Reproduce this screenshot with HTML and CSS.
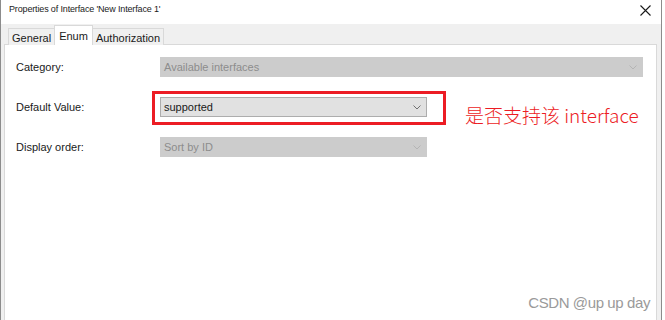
FILE: index.html
```html
<!DOCTYPE html>
<html lang="en">
<head>
<meta charset="utf-8">
<title>Properties of Interface</title>
<link rel="stylesheet" href="styles.css">
</head>
<body>
<div class="window">
  <div class="titlebar">
    <span class="title">Properties of Interface 'New Interface 1'</span>
    <svg class="close" width="11" height="11" viewBox="0 0 11 11"><path d="M0.5 0.5 L10.5 10.5 M10.5 0.5 L0.5 10.5" stroke="#1a1a1a" stroke-width="1.1" fill="none"/></svg>
  </div>
  <div class="client">
    <div class="tabs">
      <div class="tab">General</div>
      <div class="tab active">Enum</div>
      <div class="tab">Authorization</div>
    </div>
    <div class="panel">
      <div class="form">
        <div class="label">Category:</div>
        <div class="field">
          <div class="select disabled wide"><span>Available interfaces</span><svg class="chev" width="8" height="5" viewBox="0 0 8 5"><path d="M0.5 0.5 L4 4 L7.5 0.5" stroke="#b4b4b4" fill="none"/></svg></div>
        </div>
        <div class="label">Default Value:</div>
        <div class="field">
          <div class="highlight">
            <div class="select"><span>supported</span><svg class="chev" width="8" height="5" viewBox="0 0 8 5"><path d="M0.5 0.5 L4 4 L7.5 0.5" stroke="#707070" fill="none"/></svg></div>
          </div>
          <div class="note">是否支持该 interface</div>
        </div>
        <div class="label">Display order:</div>
        <div class="field">
          <div class="select disabled"><span>Sort by ID</span><svg class="chev" width="8" height="5" viewBox="0 0 8 5"><path d="M0.5 0.5 L4 4 L7.5 0.5" stroke="#b4b4b4" fill="none"/></svg></div>
        </div>
      </div>
      <div class="watermark">CSDN @up up day</div>
    </div>
  </div>
</div>
</body>
</html>
```
FILE: styles.css
```css
html, body {
  margin: 0;
  padding: 0;
  background: #ffffff;
  font-family: "Liberation Sans", Arial, sans-serif;
}
.window {
  width: 662px;
  height: 320px;
  box-sizing: border-box;
  border-left: 1px solid #8c8c8c;
  border-right: 1px solid #8c8c8c;
  display: flex;
  flex-direction: column;
  overflow: hidden;
}
.titlebar {
  height: 24px;
  flex: none;
  background: #ffffff;
  display: flex;
  align-items: center;
  justify-content: space-between;
  padding: 0 10px 6px 8px;
  box-sizing: border-box;
}
.title {
  font-size: 9px;
  color: #1a1a1a;
  letter-spacing: -0.15px;
}
.close {
  display: block;
  margin-top: 2px;
}
.client {
  flex: 1;
  background: #f0f0f0;
  padding: 2px 4px 0 3px;
  display: flex;
  flex-direction: column;
}
.tabs {
  display: flex;
  align-items: flex-end;
  padding-left: 4px;
  height: 19px;
  position: relative;
  z-index: 1;
  margin-bottom: -1px;
}
.tab {
  font-size: 11px;
  color: #1a1a1a;
  height: 17px;
  box-sizing: border-box;
  padding: 3px 3px 0 3px;
  border: 1px solid #d9d9d9;
  border-bottom: none;
  background: #f0f0f0;
  margin-right: -1px;
}
.tab.active {
  background: #ffffff;
  height: 20px;
  padding: 4px 4px 0 4px;
}
.panel {
  flex: 1;
  background: #ffffff;
  border: 1px solid #d9d9d9;
  border-bottom: none;
  position: relative;
  padding: 12px 12px 0 11px;
}
.form {
  display: grid;
  grid-template-columns: 144px 1fr;
  grid-auto-rows: 20px;
  row-gap: 20px;
  align-items: center;
}
.label {
  font-size: 11px;
  color: #1a1a1a;
}
.field {
  display: flex;
  align-items: center;
}
.select {
  width: 267px;
  height: 20px;
  box-sizing: border-box;
  border: 1px solid #adadad;
  background: #e1e1e1;
  display: flex;
  align-items: center;
  justify-content: space-between;
  padding: 0 5px 0 3px;
  font-size: 11px;
  color: #1a1a1a;
}
.select.disabled {
  background: #cccccc;
  border-color: #cccccc;
  color: #8d8d8d;
}
.select.wide {
  width: 483px;
}
.chev {
  display: block;
}
.highlight {
  position: relative;
}
.highlight::after {
  content: "";
  position: absolute;
  left: -8px;
  right: -19px;
  top: -6px;
  bottom: -8px;
  border: 3px solid #ec1c24;
}
.note {
  margin-left: 38px;
  margin-top: 14px;
  font-family: "Noto Sans CJK SC", "Noto Sans", sans-serif;
  font-size: 19px;
  font-weight: 300;
  color: #ec1c24;
  white-space: nowrap;
}
.watermark {
  position: absolute;
  right: 6px;
  top: 249px;
  font-size: 15px;
  color: #9a9a9a;
  letter-spacing: -0.4px;
}
```
